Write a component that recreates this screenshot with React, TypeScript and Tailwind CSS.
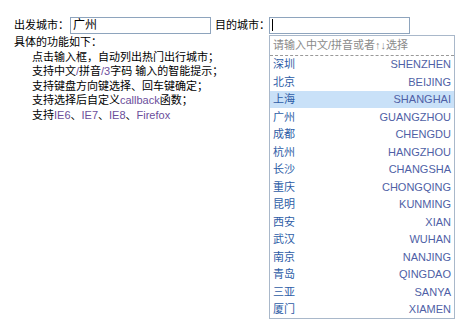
const cities: [string, string][] = [
  ['深圳', 'SHENZHEN'],
  ['北京', 'BEIJING'],
  ['上海', 'SHANGHAI'],
  ['广州', 'GUANGZHOU'],
  ['成都', 'CHENGDU'],
  ['杭州', 'HANGZHOU'],
  ['长沙', 'CHANGSHA'],
  ['重庆', 'CHONGQING'],
  ['昆明', 'KUNMING'],
  ['西安', 'XIAN'],
  ['武汉', 'WUHAN'],
  ['南京', 'NANJING'],
  ['青岛', 'QINGDAO'],
  ['三亚', 'SANYA'],
  ['厦门', 'XIAMEN'],
]

const P = ({ children }: { children: React.ReactNode }) => (
  <span className="text-[#6b4e9b]">{children}</span>
)

export default function App() {
  return (
    <div className="w-[474px] h-[335px] bg-white pl-[14px] pt-[16px] text-[11px] leading-[14.5px] text-black font-['Liberation_Sans','Noto_Sans_CJK_SC',sans-serif]">
      <div className="flex items-center h-[18px]">
        <span>出发城市：</span>
        <div className="ml-[1px] w-[141px] h-[17px] border border-[#8ea4bd] flex items-center pl-[2px] text-[12px] text-black">
          广州
        </div>
        <span className="ml-[4px]">目的城市：</span>
        <div className="relative -ml-[1px]">
          <div className="w-[141px] h-[17px] border border-[#8ea4bd] flex items-center pl-[2px]">
            <span className="w-px h-[12px] bg-black" />
          </div>
          <div className="absolute left-0 top-[18px] w-[186px] border border-[#a9b8ca] bg-white z-10">
            <div className="h-[20px] flex items-center px-[3px] text-[#8a8a8a] border-b border-dashed border-[#999]">
              请输入中文/拼音或者↑↓选择
            </div>
            {cities.map(([cn, py]) => (
              <div
                key={py}
                className={`h-[17.5px] flex items-center justify-between px-[3px] ${
                  py === 'SHANGHAI' ? 'bg-[#c9e1f8]' : ''
                }`}
              >
                <span className="text-[#2d5ca6]">{cn}</span>
                <span className="text-[#4f5fa6]">{py}</span>
              </div>
            ))}
          </div>
        </div>
      </div>
      <div className="mt-[1px]">具体的功能如下：</div>
      <div className="pl-[18px]">
        <div>点击输入框，自动列出热门出行城市；</div>
        <div>
          支持中文<P>/</P>拼音<P>/3</P>字码 输入的智能提示；
        </div>
        <div>支持键盘方向键选择、回车键确定；</div>
        <div>
          支持选择后自定义<P>callback</P>函数；
        </div>
        <div>
          支持<P>IE6</P>、<P>IE7</P>、<P>IE8</P>、<P>Firefox</P>
        </div>
      </div>
    </div>
  )
}
